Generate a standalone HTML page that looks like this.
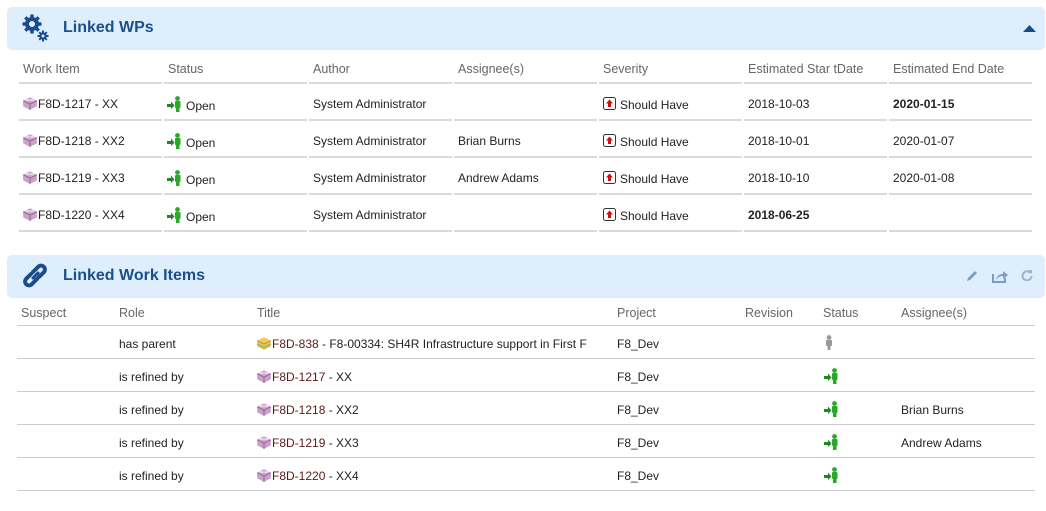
<!DOCTYPE html>
<html><head><meta charset="utf-8"><style>
*{margin:0;padding:0;box-sizing:border-box}
body{width:1046px;height:511px;background:#fff;font-family:"Liberation Sans",Arial,sans-serif;font-size:12px;color:#222;position:relative;overflow:hidden}
.hdr{position:absolute;left:7px;width:1038px;height:43px;background:#dfeefc;border-radius:5px}
.hdr .t{position:absolute;left:56px;top:12px;font-size:16px;font-weight:bold;color:#1a4f8f}
.a{position:absolute;white-space:nowrap}
.th{color:#666;font-size:12.5px}
.cl{position:absolute;height:2px;background:#dadada}
.wi{display:inline-block;width:16px;height:14px;vertical-align:-2px;margin-right:0}
.lnk{color:#5a1a1a}
</style></head><body>

<div class="hdr" style="top:7px">
<svg style="position:absolute;left:14px;top:6px" width="30" height="30" viewBox="0 0 30 30">
<g fill="#1a4c8c">
<circle cx="11" cy="11" r="7"/>
<g stroke="#1a4c8c" stroke-width="3.5">
<line x1="11" y1="1.5" x2="11" y2="20.5"/><line x1="1.5" y1="11" x2="20.5" y2="11"/>
<line x1="4.3" y1="4.3" x2="17.7" y2="17.7"/><line x1="17.7" y1="4.3" x2="4.3" y2="17.7"/></g>
<circle cx="11" cy="11" r="3" fill="#dfeefc"/>
<circle cx="22" cy="23" r="3.6"/>
<g stroke="#1a4c8c" stroke-width="2"><line x1="22" y1="17.5" x2="22" y2="28.5"/><line x1="16.5" y1="23" x2="27.5" y2="23"/><line x1="18.2" y1="19.2" x2="25.8" y2="26.8"/><line x1="25.8" y1="19.2" x2="18.2" y2="26.8"/></g>
<circle cx="22" cy="23" r="1.5" fill="#dfeefc"/></g></svg>
<div class="t">Linked WPs</div>
<svg style="position:absolute;left:1016px;top:18px" width="13" height="8"><polygon points="6.5,0 13,7 0,7" fill="#1a4c8c"/></svg>
</div>

<div class="a th" style="left:23px;top:62px">Work Item</div>
<div class="a th" style="left:168px;top:62px">Status</div>
<div class="a th" style="left:313px;top:62px">Author</div>
<div class="a th" style="left:458px;top:62px">Assignee(s)</div>
<div class="a th" style="left:603px;top:62px">Severity</div>
<div class="a th" style="left:748px;top:62px">Estimated Star tDate</div>
<div class="a th" style="left:893px;top:62px">Estimated End Date</div>

<div id="t1"></div>

<div class="hdr" style="top:255px">
<svg style="position:absolute;left:16px;top:8px" width="26" height="26" viewBox="0 0 26 26">
<g fill="none" stroke="#1a4c8c" stroke-width="4" stroke-linecap="round">
<path d="M10 9 L15 4 a3.5 3.5 0 0 1 6 5 L16 14"/>
<path d="M14 16 L9 21 a3.5 3.5 0 0 1 -6 -5 L8 11"/>
<line x1="10" y1="15" x2="15" y2="10" stroke-width="3"/></g></svg>
<div class="t">Linked Work Items</div>
<svg style="position:absolute;left:958px;top:14px" width="14" height="14"><path d="M2 12 L3 9 L10 2 L12 4 L5 11 Z" fill="#7a9cc6"/></svg>
<svg style="position:absolute;left:985px;top:14px" width="17" height="14"><path d="M1 5 V13 H13 V9" fill="none" stroke="#7a9cc6" stroke-width="2"/><path d="M4 11 C5 6 8 5 11 5 V2 L16 6 L11 10 V7 C8 7 6 8 4 11Z" fill="#7a9cc6"/></svg>
<svg style="position:absolute;left:1014px;top:14px" width="12" height="12"><path d="M9.5 4 A4.5 4.5 0 1 0 10.5 7" fill="none" stroke="#9ab4d4" stroke-width="2"/><polygon points="7,1 11,1 11,5" fill="#9ab4d4"/></svg>
</div>

<div class="a th" style="left:21px;top:306px">Suspect</div>
<div class="a th" style="left:119px;top:306px">Role</div>
<div class="a th" style="left:257px;top:306px">Title</div>
<div class="a th" style="left:617px;top:306px">Project</div>
<div class="a th" style="left:745px;top:306px">Revision</div>
<div class="a th" style="left:823px;top:306px">Status</div>
<div class="a th" style="left:901px;top:306px">Assignee(s)</div>

<div id="t2"></div>

<script>
var cube='<svg class="wi" viewBox="0 0 14 12"><path d="M1 4 L7 1 L13 4 L13 9 L7 12 L1 9Z" fill="#c9a3c9"/><path d="M1 4 L7 7 L13 4 M7 7 V12" stroke="#9a6a9a" fill="none"/><ellipse cx="5" cy="3.5" rx="2" ry="1" fill="#e8d4e8"/><ellipse cx="9" cy="3.5" rx="2" ry="1" fill="#e8d4e8"/></svg>';
var cubeY='<svg class="wi" viewBox="0 0 14 12"><path d="M1 4 L7 1 L13 4 L13 9 L7 12 L1 9Z" fill="#f0c860"/><path d="M1 7 L7 10 L13 7" stroke="#9cc060" stroke-width="2" fill="none"/><path d="M1 4 L7 7 L13 4" stroke="#d09030" fill="none"/></svg>';
var open='<svg width="15" height="16" style="vertical-align:-2px;margin-right:4px"><circle cx="10.5" cy="2.5" r="2.4" fill="#2aa82a"/><rect x="8" y="5" width="5.5" height="7" rx="1" fill="#2aa82a"/><rect x="9" y="11" width="3.5" height="5" fill="#2aa82a"/><polygon points="0,8 4,8 4,5.5 7.5,9.5 4,13 4,11 0,11" fill="#1d8a1d"/></svg>';
var grey='<svg width="10" height="15"><circle cx="5" cy="2.5" r="2.4" fill="#999"/><rect x="2" y="5" width="6" height="6" rx="1" fill="#999"/><rect x="3.5" y="10" width="3" height="5" fill="#999"/></svg>';
var sev='<svg width="13" height="13" style="vertical-align:-1px;margin-right:4px"><rect x="0.5" y="0.5" width="12" height="12" rx="2" fill="#fff" stroke="#333"/><polygon points="6.5,2.5 10,6.5 8,6.5 8,10 5,10 5,6.5 3,6.5" fill="#d01010"/></svg>';
var cols=[19,164,309,454,599,744,889];
var r1=[["F8D-1217 - XX","","2018-10-03","<b>2020-01-15</b>"],["F8D-1218 - XX2","Brian Burns","2018-10-01","2020-01-07"],["F8D-1219 - XX3","Andrew Adams","2018-10-10","2020-01-08"],["F8D-1220 - XX4","","<b>2018-06-25</b>",""]];
var h='';
for(var c=0;c<7;c++)h+='<div class="cl" style="left:'+cols[c]+'px;top:82px;width:143px"></div>';
r1.forEach(function(r,i){var y=97+i*37;var ly=82+(i+1)*37;
h+='<div class="a" style="left:22px;top:'+(y-1)+'px">'+cube+r[0]+'</div>';
h+='<div class="a" style="left:167px;top:'+(y-1)+'px">'+open+'Open</div>';
h+='<div class="a" style="left:313px;top:'+y+'px">System Administrator</div>';
h+='<div class="a" style="left:458px;top:'+y+'px">'+r[1]+'</div>';
h+='<div class="a" style="left:603px;top:'+y+'px">'+sev+'Should Have</div>';
h+='<div class="a" style="left:748px;top:'+y+'px">'+r[2]+'</div>';
h+='<div class="a" style="left:893px;top:'+y+'px">'+r[3]+'</div>';
for(var c=0;c<7;c++)h+='<div class="cl" style="left:'+cols[c]+'px;top:'+ly+'px;width:143px"></div>';});
document.getElementById('t1').innerHTML=h;
var r2=[["has parent",cubeY+'<span class="lnk">F8D-838</span> - F8-00334: SH4R Infrastructure support in First F',grey,""],
["is refined by",cube+'<span class="lnk">F8D-1217</span> - XX',open,""],
["is refined by",cube+'<span class="lnk">F8D-1218</span> - XX2',open,"Brian Burns"],
["is refined by",cube+'<span class="lnk">F8D-1219</span> - XX3',open,"Andrew Adams"],
["is refined by",cube+'<span class="lnk">F8D-1220</span> - XX4',open,""]];
h='<div class="cl" style="left:17px;top:325px;width:1018px;height:1px;background:#ccc"></div>';
r2.forEach(function(r,i){var y=337+i*33;var ly=325+(i+1)*33;
h+='<div class="a" style="left:119px;top:'+y+'px">'+r[0]+'</div>';
h+='<div class="a" style="left:256px;top:'+(y-1)+'px;width:357px;overflow:hidden">'+r[1]+'</div>';
h+='<div class="a" style="left:617px;top:'+y+'px">F8_Dev</div>';
h+='<div class="a" style="left:824px;top:'+(y-2)+'px">'+r[2]+'</div>';
h+='<div class="a" style="left:901px;top:'+y+'px">'+r[3]+'</div>';
h+='<div class="cl" style="left:17px;top:'+ly+'px;width:1018px;height:1px;background:#ccc"></div>';});
document.getElementById('t2').innerHTML=h;
</script>
</body></html>
